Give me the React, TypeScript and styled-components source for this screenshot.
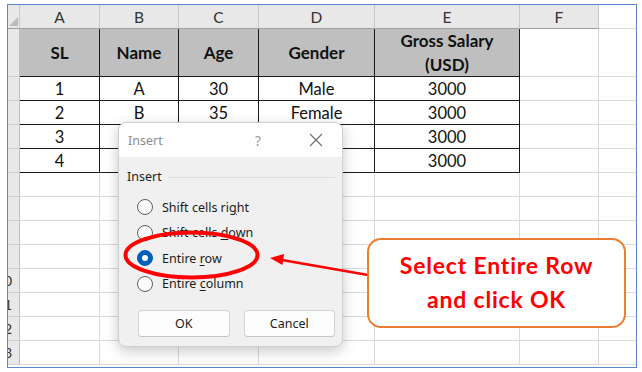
import React from "react";
import styled, { createGlobalStyle, css } from "styled-components";

const GlobalStyle = createGlobalStyle`
  html, body { margin: 0; padding: 0; background: #ffffff; }
  body { font-family: Lato, "Liberation Sans", sans-serif; }
`;

const COLS = [12, 80, 79, 80, 116, 145, 79, 37];
const LETTERS = ["", "A", "B", "C", "D", "E", "F", ""];

const Frame = styled.div`
  position: relative;
  margin: 4px 0 0 7px;
  width: 628px;
  height: 362px;
  border: 1px solid #5a87cf;
  overflow: hidden;
`;

const Sheet = styled.div`
  display: grid;
  grid-template-columns: ${COLS.map((c) => `${c}px`).join(" ")};
  grid-template-rows: 24px 48px repeat(13, 24px);
`;

const Cell = styled.div<{ $kind?: "col" | "row" | "corner" | "head" | "data" | "blank" | "edge" }>`
  box-sizing: border-box;
  display: flex;
  align-items: center;
  justify-content: center;
  overflow: hidden;
  border-right: 1px solid #d9d9d9;
  border-bottom: 1px solid #d9d9d9;
  font-size: 16.5px;
  color: #111;
  background: #ffffff;
  ${(p) =>
    p.$kind === "col" &&
    css`
      background: #e8e8e8;
      border-right-color: #c8c8c8;
      border-bottom-color: #9e9e9e;
      color: #333;
      font-size: 15.5px;
    `}
  ${(p) =>
    p.$kind === "corner" &&
    css`
      background: #e8e8e8;
      border-right-color: #c8c8c8;
      border-bottom-color: #9e9e9e;
      position: relative;
    `}
  ${(p) =>
    p.$kind === "row" &&
    css`
      background: #e8e8e8;
      border-right-color: #bdbdbd;
      border-bottom-color: #d0d0d0;
      justify-content: flex-start;
      color: #333;
      font-size: 14px;
    `}
  ${(p) =>
    p.$kind === "head" &&
    css`
      background: #bfbfbf;
      border-right-color: #1a1a1a;
      border-bottom-color: #1a1a1a;
      font-weight: 700;
      font-size: 17px;
      flex-direction: column;
      line-height: 24px;
    `}
  ${(p) =>
    p.$kind === "data" &&
    css`
      border-right-color: #1a1a1a;
      border-bottom-color: #1a1a1a;
    `}
  ${(p) =>
    p.$kind === "edge" &&
    css`
      border-right: none;
      border-bottom-color: #dcdcdc;
    `}
`;

const Corner = styled.span`
  position: absolute;
  right: 1px;
  bottom: 2px;
  width: 0;
  height: 0;
  border-left: 9px solid transparent;
  border-bottom: 9px solid #bcbcbc;
`;

const RowNum = styled.span`
  display: block;
  width: 30px;
  margin-left: -19px;
  text-align: center;
  flex-shrink: 0;
`;

const Dialog = styled.div`
  position: absolute;
  left: 110px;
  top: 117px;
  width: 225px;
  height: 225px;
  box-sizing: border-box;
  border: 1px solid #cfcfcf;
  border-radius: 8px;
  background: #f0f0f0;
  box-shadow: 0 4px 14px rgba(0, 0, 0, 0.22);
  overflow: hidden;
  font-family: "Noto Sans", "Open Sans", sans-serif;
  display: flex;
  flex-direction: column;
`;

const TitleBar = styled.div`
  height: 34px;
  background: #ffffff;
  display: flex;
  align-items: center;
  padding: 0 0 0 9px;
  font-size: 12.5px;
  color: #8c8c8c;
`;

const Title = styled.span`
  flex: 1;
`;

const Help = styled.span`
  width: 20px;
  margin-right: 41px;
  text-align: center;
  font-size: 14px;
  color: #9a9a9a;
`;

const Close = styled.span`
  width: 14px;
  margin-right: 19px;
  display: flex;
`;

const Body = styled.div`
  padding: 11px 7px 0 8px;
  display: flex;
  flex-direction: column;
`;

const Group = styled.div`
  display: flex;
  align-items: center;
  gap: 6px;
  font-size: 12.5px;
  color: #222;
  margin-bottom: 13px;
`;

const GroupLine = styled.span`
  flex: 1;
  height: 1px;
  background: #dddddd;
  margin-top: 2px;
`;

const Options = styled.div`
  display: flex;
  flex-direction: column;
  padding-left: 10px;
  gap: 7.5px;
`;

const Option = styled.div`
  display: flex;
  align-items: center;
  gap: 9px;
  height: 18px;
  font-size: 12.5px;
  color: #1b1b1b;
`;

const Radio = styled.span<{ $on?: boolean }>`
  box-sizing: border-box;
  width: 16px;
  height: 16px;
  border-radius: 50%;
  border: 1px solid #5f5f5f;
  background: #fbfbfb;
  display: flex;
  align-items: center;
  justify-content: center;
  ${(p) =>
    p.$on &&
    css`
      border-color: #005fb8;
      background: #005fb8;
      &::after {
        content: "";
        width: 6px;
        height: 6px;
        border-radius: 50%;
        background: #ffffff;
      }
    `}
`;

const U = styled.span`
  text-decoration: underline;
  text-underline-offset: 2px;
`;

const Buttons = styled.div`
  display: flex;
  gap: 14px;
  padding-left: 11px;
  margin-top: 17px;
`;

const Button = styled.div`
  box-sizing: border-box;
  width: 92px;
  height: 27px;
  border: 1px solid #d3d3d3;
  border-bottom-color: #c4c4c4;
  border-radius: 4px;
  background: #fdfdfd;
  display: flex;
  align-items: center;
  justify-content: center;
  font-size: 12.5px;
  color: #1b1b1b;
`;

const Overlay = styled.svg`
  position: absolute;
  left: 0;
  top: 0;
  pointer-events: none;
`;

const Callout = styled.div`
  position: absolute;
  left: 359px;
  top: 233px;
  width: 259px;
  height: 90px;
  box-sizing: border-box;
  border: 2px solid #ed7d31;
  border-radius: 14px;
  background: #ffffff;
  display: flex;
  flex-direction: column;
  align-items: center;
  justify-content: center;
  font-family: Lato, "Liberation Sans", sans-serif;
  font-weight: 700;
  font-size: 23px;
  letter-spacing: 0.8px;
  line-height: 34px;
  color: #ff0000;
  padding-bottom: 3px;
`;

const tableRows = [
  ["1", "A", "30", "Male", "3000"],
  ["2", "B", "35", "Female", "3000"],
  ["3", "C", "28", "Male", "3000"],
  ["4", "D", "40", "Male", "3000"],
];

const HEADS = ["SL", "Name", "Age", "Gender", "Gross Salary"];

const App = () => {
  const cells: React.ReactNode[] = [];

  // column letters
  LETTERS.forEach((l, i) => {
    if (i === 0) {
      cells.push(
        <Cell key="c0" $kind="corner">
          <Corner />
        </Cell>
      );
    } else if (i === 7) {
      cells.push(<Cell key="c7" $kind="edge" />);
    } else {
      cells.push(
        <Cell key={`c${i}`} $kind="col">
          {l}
        </Cell>
      );
    }
  });

  // sheet rows
  for (let r = 1; r <= 13; r++) {
    cells.push(
      <Cell key={`r${r}`} $kind="row">
        <RowNum>{r}</RowNum>
      </Cell>
    );
    for (let c = 1; c <= 7; c++) {
      const key = `${r}-${c}`;
      if (c === 7) {
        cells.push(<Cell key={key} $kind="edge" />);
      } else if (r === 1 && c <= 5) {
        cells.push(
          <Cell key={key} $kind="head">
            <span>{HEADS[c - 1]}</span>
            {c === 5 && <span>(USD)</span>}
          </Cell>
        );
      } else if (r >= 2 && r <= 5 && c <= 5) {
        cells.push(
          <Cell key={key} $kind="data">
            {tableRows[r - 2][c - 1]}
          </Cell>
        );
      } else {
        cells.push(<Cell key={key} $kind="blank" />);
      }
    }
  }

  return (
    <>
      <GlobalStyle />
      <Frame>
        <Sheet>{cells}</Sheet>

        <Dialog>
          <TitleBar>
            <Title>Insert</Title>
            <Help>?</Help>
            <Close>
              <svg width="14" height="14" viewBox="0 0 14 14">
                <path d="M1 1 L13 13 M13 1 L1 13" stroke="#6a6a6a" strokeWidth="1.1" fill="none" />
              </svg>
            </Close>
          </TitleBar>
          <Body>
            <Group>
              Insert
              <GroupLine />
            </Group>
            <Options>
              <Option>
                <Radio />
                <span>
                  Shift cells ri<U>g</U>ht
                </span>
              </Option>
              <Option>
                <Radio />
                <span>
                  Shift cells <U>d</U>own
                </span>
              </Option>
              <Option>
                <Radio $on />
                <span>
                  Entire <U>r</U>ow
                </span>
              </Option>
              <Option>
                <Radio />
                <span>
                  Entire <U>c</U>olumn
                </span>
              </Option>
            </Options>
            <Buttons>
              <Button>OK</Button>
              <Button>Cancel</Button>
            </Buttons>
          </Body>
        </Dialog>

        <Overlay width="628" height="362" viewBox="8 5 628 362">
          <ellipse cx="191.5" cy="255" rx="66" ry="22.5" fill="none" stroke="#ff0000" strokeWidth="4" />
          <line x1="368" y1="275" x2="282" y2="260" stroke="#ff0000" strokeWidth="2.4" />
          <path d="M270 258 L284 254 L282.5 265 Z" fill="#ff0000" />
        </Overlay>

        <Callout>
          <span>Select Entire Row</span>
          <span>and click OK</span>
        </Callout>
      </Frame>
    </>
  );
};

export default App;
